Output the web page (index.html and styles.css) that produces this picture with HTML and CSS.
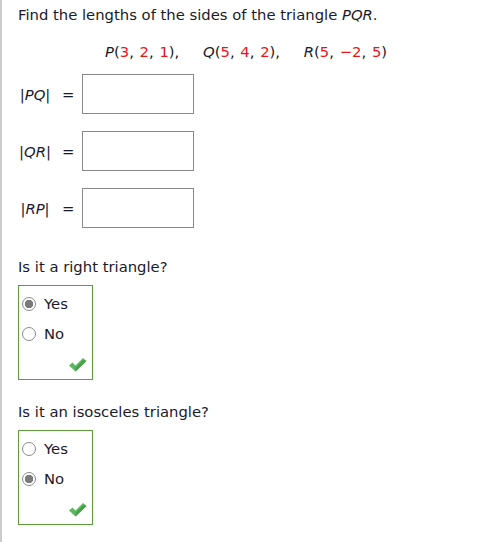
FILE: index.html
```html
<!DOCTYPE html>
<html lang="en">
<head>
    <meta charset="UTF-8">
    <title>Triangle PQR</title>
    <link rel="stylesheet" href="styles.css">
</head>
<body>
    <div class="question">
        <p class="prompt">Find the lengths of the sides of the triangle <i>PQR</i>.</p>
        <p class="points">
            <span class="pt"><i>P</i>(<b>3</b>, <b>2</b>, <b>1</b>),</span>
            <span class="pt"><i>Q</i>(<b>5</b>, <b>4</b>, <b>2</b>),</span>
            <span class="pt"><i>R</i>(<b>5</b>, <b>&minus;2</b>, <b>5</b>)</span>
        </p>

        <div class="eq-row">
            <span class="eq-label">|<i>PQ</i>|</span>
            <span class="eq-sign">=</span>
            <input class="answer" type="text">
        </div>
        <div class="eq-row">
            <span class="eq-label">|<i>QR</i>|</span>
            <span class="eq-sign">=</span>
            <input class="answer" type="text">
        </div>
        <div class="eq-row">
            <span class="eq-label">|<i>RP</i>|</span>
            <span class="eq-sign">=</span>
            <input class="answer" type="text">
        </div>

        <p class="ask">Is it a right triangle?</p>
        <div class="choices">
            <label class="choice"><input type="radio" name="right" checked> Yes</label>
            <label class="choice"><input type="radio" name="right"> No</label>
            <svg class="tick" width="19" height="15" viewBox="0 0 19 15">
                <path d="M1 8.5 L4.5 5.5 L7.5 8.5 L15 1 L18.5 4 L7.5 14.5 Z" fill="#5cb85c"/>
                <path d="M7.5 14.5 L18.5 4 L15.5 3 L7.5 11 Z" fill="#4a9d4a"/>
            </svg>
        </div>

        <p class="ask">Is it an isosceles triangle?</p>
        <div class="choices">
            <label class="choice"><input type="radio" name="iso"> Yes</label>
            <label class="choice"><input type="radio" name="iso" checked> No</label>
            <svg class="tick" width="19" height="15" viewBox="0 0 19 15">
                <path d="M1 8.5 L4.5 5.5 L7.5 8.5 L15 1 L18.5 4 L7.5 14.5 Z" fill="#5cb85c"/>
                <path d="M7.5 14.5 L18.5 4 L15.5 3 L7.5 11 Z" fill="#4a9d4a"/>
            </svg>
        </div>
    </div>
</body>
</html>
```

FILE: styles.css
```css
body {
    margin: 0;
    font-family: "DejaVu Sans", Verdana, sans-serif;
    font-size: 14.8px;
    color: #1a1a2a;
    background: #fff;
}
.question {
    border-left: 2px solid #ccc;
    min-height: 542px;
    padding: 6px 0 0 16px;
    box-sizing: border-box;
}
p {
    margin: 0;
}
.prompt {
    line-height: 18px;
}
.points {
    margin: 19px 0 0 87px;
    line-height: 18px;
    word-spacing: 1px;
}
.pt {
    margin-right: 18px;
}
.points b {
    font-weight: normal;
    color: #e8141a;
}
.eq-row {
    display: flex;
    align-items: center;
    margin-top: 13px;
    height: 40px;
}
.eq-row + .eq-row {
    margin-top: 17px;
}
.eq-label {
    width: 34px;
    text-align: center;
}
.eq-sign {
    width: 30px;
    padding-left: 10px;
    box-sizing: border-box;
}
.answer {
    width: 112px;
    height: 40px;
    box-sizing: border-box;
    border: 1px solid #888;
    margin: 0;
    padding: 0 6px;
}
.ask {
    margin-top: 30px;
    line-height: 18px;
}
.choices {
    margin-top: 9px;
    width: 75px;
    height: 95px;
    box-sizing: border-box;
    border: 1px solid #5c9e38;
    padding: 8px 0 0 3px;
    display: flex;
    flex-direction: column;
    gap: 10px;
    position: relative;
}
.choices + .ask {
    margin-top: 23px;
}
.choice {
    display: flex;
    align-items: center;
    gap: 8px;
    line-height: 20px;
}
.choice input {
    appearance: none;
    margin: 0;
    width: 14px;
    height: 14px;
    border: 1px solid #8a8a8a;
    border-radius: 50%;
    background: #fff;
    box-sizing: border-box;
}
.choice input:checked {
    background: radial-gradient(circle, #7a7a7a 0 4px, #fff 4.5px);
}
.tick {
    position: absolute;
    right: 5px;
    bottom: 7px;
}
```
